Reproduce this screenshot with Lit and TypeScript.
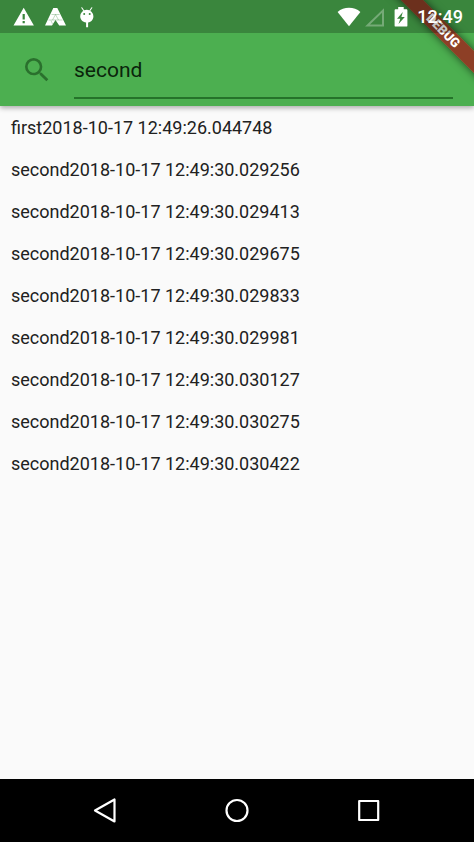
import { LitElement, html, css } from "lit";
import { customElement, state } from "lit/decorators.js";

@customElement("status-bar")
class StatusBar extends LitElement {
  static styles = css`
    :host {
      position: relative;
      z-index: 2;
      display: flex;
      align-items: center;
      justify-content: space-between;
      height: 33px;
      padding: 0 11px 0 12px;
      background: rgba(0, 0, 0, 0.23);
      color: #fff;
    }
    .group {
      display: flex;
      align-items: center;
    }
    .notes {
      gap: 8px;
    }
    .system {
      gap: 2px;
    }
    svg {
      display: block;
      width: 24px;
      height: 24px;
      fill: currentColor;
    }
    .clock {
      padding-left: 2px;
      font-size: 18px;
      font-weight: 500;
      line-height: 24px;
    }
  `;

  render() {
    return html`
      <div class="group notes">
        <svg viewBox="0 0 24 24" role="img" aria-label="Warning">
          <path
            fill-rule="evenodd"
            d="M1.500 20.500 11.700 2.700 21.900 20.500ZM10.600 9v5.500h2.200v-5.500ZM10.600 16v2.300h2.200v-2.300Z"
          />
        </svg>
        <svg viewBox="0 0 24 24" role="img" aria-label="App notification">
          <path d="M9.300 3h4l8.700 17.500h-6.800l-3.700-5.500-3.500 5.500H1Z" />
          <path
            d="M7.500 9.500h8M4.500 15h14M11.500 9.500l-3 5.500M11.500 9.500l3 5.500M7 15.500l1.500 3.500"
            fill="none"
            stroke="#3b873e"
            stroke-opacity=".4"
            stroke-width=".8"
          />
        </svg>
        <svg viewBox="0 0 24 24" role="img" aria-label="Android debugging">
          <path
            fill-rule="evenodd"
            d="M4.200 11.300a6.600 6.600 0 1 1 13.200 0c0 3.300-2.200 5.700-5.300 6.300v4.700h-2v-4.700c-3.500-.6-5.900-3-5.900-6.300ZM7.200 9a1 1 0 1 0 2 0 1 1 0 1 0-2 0ZM12.700 9a1 1 0 1 0 2 0 1 1 0 1 0-2 0Z"
          />
          <path
            d="m7.800 5.800-2-3M13.800 5.800l2-3"
            stroke="currentColor"
            stroke-width="1.100"
            stroke-linecap="round"
          />
        </svg>
      </div>
      <div class="group system">
        <svg viewBox="0 0 24 24" role="img" aria-label="Wi-Fi">
          <path
            d="M12 21.300.600 7C3.800 4.200 7.800 2.800 12 2.800s8.200 1.400 11.400 4.200Z"
          />
        </svg>
        <svg viewBox="0 0 24 24" role="img" aria-label="No mobile signal">
          <path
            d="M20 5.500v15H4.500Z"
            fill="none"
            stroke="#fff"
            stroke-opacity=".3"
            stroke-width="2"
          />
        </svg>
        <svg viewBox="0 0 24 24" role="img" aria-label="Battery charging">
          <path
            fill-rule="evenodd"
            d="M9.200 2h5.500v2.200h2.500c.8 0 1.200.5 1.200 1.200v15c0 .8-.4 1.200-1.200 1.200H6.800c-.8 0-1.200-.4-1.200-1.200V5.400c0-.7.4-1.200 1.200-1.200h2.400ZM13.800 7l-5.800 6.800h3.300l-1.800 5.200 6.300-7h-3.400Z"
          />
        </svg>
        <time class="clock">12:49</time>
      </div>
    `;
  }
}

@customElement("debug-banner")
class DebugBanner extends LitElement {
  static styles = css`
    :host {
      position: absolute;
      z-index: 1;
      top: 0;
      right: 0;
      width: 96px;
      height: 96px;
      overflow: hidden;
      pointer-events: none;
    }
    .ribbon {
      position: absolute;
      top: 23px;
      right: -49px;
      width: 160px;
      height: 16px;
      background: rgba(165, 24, 24, 0.74);
      box-shadow: 0 0 9px rgba(0, 0, 0, 0.6);
      color: #fff;
      font-size: 13px;
      font-weight: 900;
      line-height: 16px;
      text-align: center;
      transform: rotate(45deg);
    }
  `;

  render() {
    return html`<div class="ribbon">DEBUG</div>`;
  }
}

@customElement("search-bar")
class SearchBar extends LitElement {
  static styles = css`
    :host {
      display: block;
    }
    form {
      display: flex;
      align-items: center;
      gap: 21px;
      height: 73px;
      padding: 0 21px;
    }
    button {
      display: flex;
      flex: none;
      padding: 0;
      border: 0;
      background: none;
      color: #2a702d;
    }
    svg {
      width: 32px;
      height: 32px;
      fill: currentColor;
    }
    input {
      flex: 1;
      min-width: 0;
      box-sizing: border-box;
      height: 58px;
      padding: 2px 0 0;
      border: 0;
      border-bottom: 2px solid #25732a;
      border-radius: 0;
      outline: none;
      background: none;
      color: #0a240b;
      font: inherit;
      font-size: 21px;
    }
  `;

  render() {
    return html`
      <form @submit=${(e: Event) => e.preventDefault()}>
        <button aria-label="Search">
          <svg viewBox="0 0 24 24" aria-hidden="true">
            <path
              d="M15.500 14h-.79l-.28-.27A6.471 6.471 0 0 0 16 9.500 6.500 6.500 0 1 0 9.500 16c1.610 0 3.090-.59 4.230-1.570l.27.28v.79l5 4.990L20.490 19l-4.990-5zm-6 0C7.010 14 5 11.990 5 9.500S7.010 5 9.500 5 14 7.010 14 9.500 11.990 14 9.500 14z"
            />
          </svg>
        </button>
        <input type="text" aria-label="Search text" .value=${"second"} />
      </form>
    `;
  }
}

@customElement("nav-bar")
class NavBar extends LitElement {
  static styles = css`
    :host {
      display: flex;
      align-items: center;
      justify-content: center;
      gap: 100px;
      height: 63px;
      background: #000;
    }
    button {
      display: flex;
      padding: 0;
      border: 0;
      background: none;
      color: #fff;
    }
    svg {
      width: 32px;
      height: 32px;
      fill: none;
      stroke: currentColor;
      stroke-width: 2.2;
      stroke-linejoin: round;
    }
  `;

  render() {
    return html`
      <button aria-label="Back">
        <svg viewBox="0 0 32 32"><path d="M25.500 4.500v22L6 15.500Z" /></svg>
      </button>
      <button aria-label="Home">
        <svg viewBox="0 0 32 32"><circle cx="16" cy="15.500" r="10.500" /></svg>
      </button>
      <button aria-label="Recent apps">
        <svg viewBox="0 0 32 32">
          <rect x="6.200" y="6" width="19" height="19" />
        </svg>
      </button>
    `;
  }
}

@customElement("app-root")
class AppRoot extends LitElement {
  static styles = css`
    :host {
      position: relative;
      display: flex;
      flex-direction: column;
      min-height: 100vh;
      background: #fafafa;
      color: #212121;
      font-family: Roboto, "Liberation Sans", sans-serif;
    }
    header {
      background: #4caf50;
      box-shadow: 0 2px 5px rgba(0, 0, 0, 0.32);
    }
    main {
      flex: 1;
    }
    ul {
      margin: 0;
      padding: 1px 11px 0;
      list-style: none;
    }
    li {
      font-size: 18px;
      line-height: 42px;
    }
  `;

  @state() private entries = [
    "first2018-10-17 12:49:26.044748",
    "second2018-10-17 12:49:30.029256",
    "second2018-10-17 12:49:30.029413",
    "second2018-10-17 12:49:30.029675",
    "second2018-10-17 12:49:30.029833",
    "second2018-10-17 12:49:30.029981",
    "second2018-10-17 12:49:30.030127",
    "second2018-10-17 12:49:30.030275",
    "second2018-10-17 12:49:30.030422",
  ];

  render() {
    return html`
      <header>
        <status-bar></status-bar>
        <search-bar></search-bar>
      </header>
      <main>
        <ul>
          ${this.entries.map((entry) => html`<li>${entry}</li>`)}
        </ul>
      </main>
      <nav-bar></nav-bar>
      <debug-banner></debug-banner>
    `;
  }
}
